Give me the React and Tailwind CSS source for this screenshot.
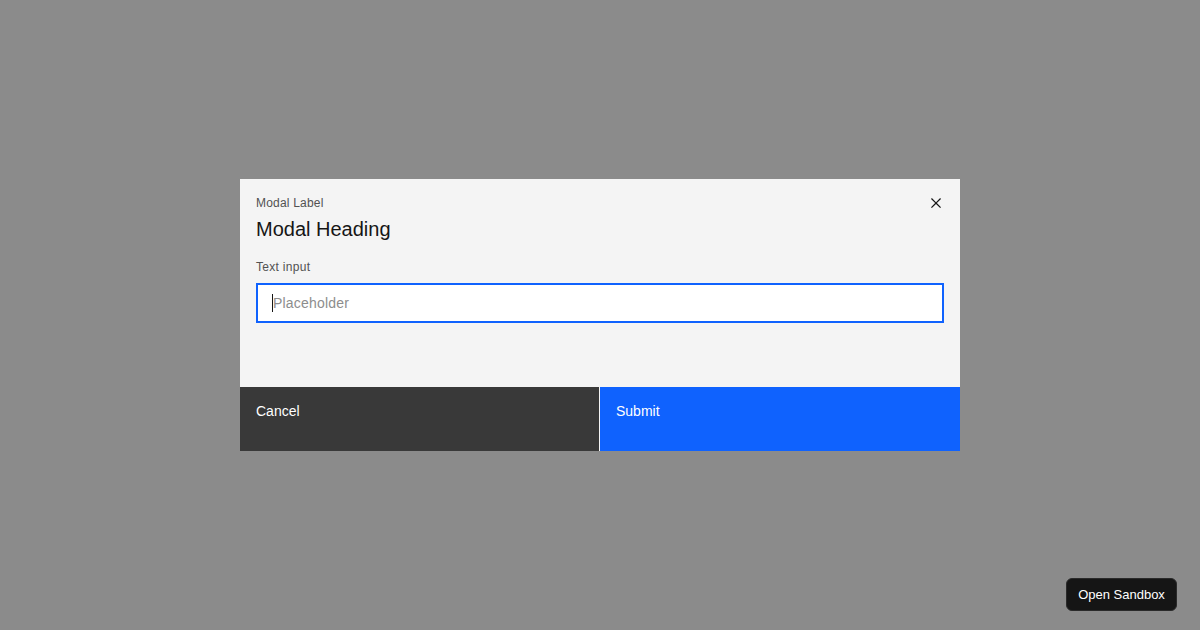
import React from 'react';

export default function App() {
  return (
    <div
      className="relative w-[1200px] h-[630px] bg-[#8b8b8b] flex items-center justify-center overflow-hidden"
      style={{ fontFamily: '"Liberation Sans", Arial, sans-serif' }}
    >
      <div className="relative w-[720px] bg-[#f4f4f4] flex flex-col">
        {/* header */}
        <div className="px-4 pt-4">
          <p className="text-xs leading-4 text-[#525252] tracking-[0.2px]">Modal Label</p>
          <h2 className="mt-1 text-xl leading-7 text-[#161616]">Modal Heading</h2>
        </div>
        <button className="absolute top-0 right-0 w-12 h-12 flex items-center justify-center text-[#161616]">
          <svg width="20" height="20" viewBox="0 0 32 32" fill="currentColor">
            <path d="M24 9.4L22.6 8 16 14.6 9.4 8 8 9.4l6.6 6.6L8 22.6 9.4 24l6.6-6.6 6.6 6.6 1.4-1.4-6.6-6.6z" />
          </svg>
        </button>

        {/* body */}
        <div className="px-4 pt-4 pb-16">
          <label className="block text-xs leading-4 text-[#525252] tracking-[0.3px] mb-2">Text input</label>
          <div className="h-10 bg-white border-2 border-[#0f62fe] flex items-center pl-[14px]">
            <span className="w-px h-[18px] bg-[#161616]"></span>
            <span className="text-sm text-[#8d8d8d] tracking-[0.2px]">Placeholder</span>
          </div>
        </div>

        {/* footer */}
        <div className="flex h-16 gap-px">
          <button className="w-[359px] bg-[#393939] text-white text-sm text-left px-4 pt-[14px] flex items-start">
            Cancel
          </button>
          <button className="flex-1 bg-[#0f62fe] text-white text-sm text-left px-4 pt-[14px] flex items-start">
            Submit
          </button>
        </div>
      </div>

      <button className="absolute right-[23px] bottom-[19px] h-[33px] w-[111px] rounded-md bg-[#151515] text-white text-[13px] border border-[#2a2a2a]">
        Open Sandbox
      </button>
    </div>
  );
}
